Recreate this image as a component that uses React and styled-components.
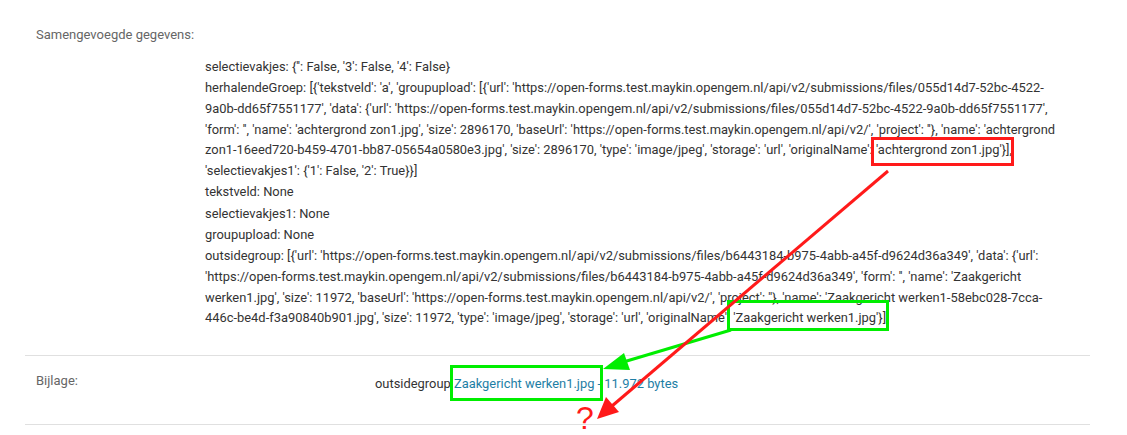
import styled, { createGlobalStyle } from "styled-components"

const GlobalStyle = createGlobalStyle`
	body {
		margin: 0;
		background: #fff;
		font-family: Roboto, "Liberation Sans", sans-serif;
	}
`

const entries = [
	"selectievakjes: {'': False, '3': False, '4': False}",
	"herhalendeGroep: [{'tekstveld': 'a', 'groupupload': [{'url': 'https://open-forms.test.maykin.opengem.nl/api/v2/submissions/files/055d14d7-52bc-4522-9a0b-dd65f7551177', 'data': {'url': 'https://open-forms.test.maykin.opengem.nl/api/v2/submissions/files/055d14d7-52bc-4522-9a0b-dd65f7551177', 'form': '', 'name': 'achtergrond zon1.jpg', 'size': 2896170, 'baseUrl': 'https://open-forms.test.maykin.opengem.nl/api/v2/', 'project': ''}, 'name': 'achtergrond zon1-16eed720-b459-4701-bb87-05654a0580e3.jpg', 'size': 2896170, 'type': 'image/jpeg', 'storage': 'url', 'originalName': 'achtergrond zon1.jpg'}], 'selectievakjes1': {'1': False, '2': True}}]",
	"tekstveld: None",
	"selectievakjes1: None",
	"groupupload: None",
	"outsidegroup: [{'url': 'https://open-forms.test.maykin.opengem.nl/api/v2/submissions/files/b6443184-b975-4abb-a45f-d9624d36a349', 'data': {'url': 'https://open-forms.test.maykin.opengem.nl/api/v2/submissions/files/b6443184-b975-4abb-a45f-d9624d36a349', 'form': '', 'name': 'Zaakgericht werken1.jpg', 'size': 11972, 'baseUrl': 'https://open-forms.test.maykin.opengem.nl/api/v2/', 'project': ''}, 'name': 'Zaakgericht werken1-58ebc028-7cca-446c-be4d-f3a90840b901.jpg', 'size': 11972, 'type': 'image/jpeg', 'storage': 'url', 'originalName': 'Zaakgericht werken1.jpg'}]",
]

const App = () => {
	return (
		<Page>
			<GlobalStyle />
			<Table>
				<Row>
					<Label top="26px">Samengevoegde gegevens:</Label>
					<Value>
						<List>
							{entries.map((e, i) => <Item key={i}>{e}</Item>)}
						</List>
					</Value>
				</Row>
				<Row bordered>
					<Label top="16px">Bijlage:</Label>
					<Value indent="170px" pad="19px 0 31px">
						outsidegroup <Link href="#">Zaakgericht werken1.jpg - 11.972 bytes</Link>
					</Value>
				</Row>
				<Row bordered />
			</Table>

			<Box color="#ff1a1a" style={{ left: 871, top: 137, width: 143, height: 29 }} />
			<Box color="#00ee00" style={{ left: 727, top: 300, width: 162, height: 31 }} />
			<Box color="#00ee00" style={{ left: 450, top: 365, width: 153, height: 36 }} />

			<Overlay width="1127" height="435" viewBox="0 0 1127 435">
				<line x1="731" y1="330" x2="620" y2="363" stroke="#00ee00" strokeWidth="3" />
				<polygon points="603,369 624,353 630,370" fill="#00ee00" />
				<line x1="888" y1="171" x2="612" y2="406" stroke="#ff1a1a" strokeWidth="3" />
				<polygon points="597,419 606,397 619,412" fill="#ff1a1a" />
			</Overlay>
			<Question>?</Question>
		</Page>
	)
}

const Page = styled.div`
	position: relative;
	width: 1127px;
	height: 435px;
	overflow: hidden;
`

const Table = styled.div`
	display: flex;
	flex-direction: column;
	margin-left: 25px;
	width: 1065px;
`

const Row = styled.div`
	display: grid;
	grid-template-columns: 180px 1fr;
	border-top: ${props => props.bordered ? "1px solid #e0e0e0" : "none"};
`

const Label = styled.div`
	padding: ${props => props.top} 0 0 11px;
	font-size: 13px;
	line-height: 18px;
	color: #666;
`

const Value = styled.div`
	padding: ${props => props.pad || "0"};
	padding-left: ${props => props.indent || "0"};
	padding-right: 20px;
	font-size: 12.9px;
	line-height: 18px;
	color: #333;
`

const List = styled.ul`
	list-style: none;
	margin: 0;
	padding: 57px 0 25px;
`

const Item = styled.li`
	line-height: 20.6px;
	margin-bottom: 0.8px;
`

const Link = styled.a`
	color: #1d7ea5;
	text-decoration: none;
`

const Box = styled.div`
	position: absolute;
	box-sizing: border-box;
	border: 3px solid ${props => props.color};
`

const Overlay = styled.svg`
	position: absolute;
	left: 0;
	top: 0;
	pointer-events: none;
`

const Question = styled.div`
	position: absolute;
	left: 576px;
	top: 398px;
	font-family: "Liberation Sans", sans-serif;
	font-size: 32px;
	line-height: 40px;
	color: #ff1a1a;
`

export default App
